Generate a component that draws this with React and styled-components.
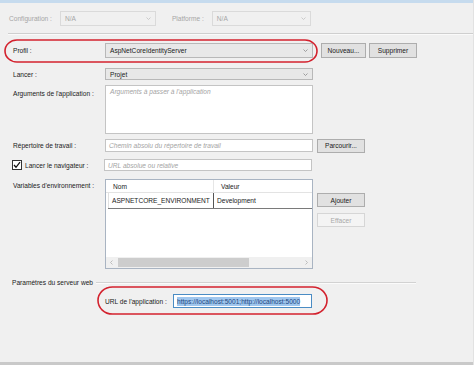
import React from "react";
import styled, { createGlobalStyle } from "styled-components";

const GlobalStyle = createGlobalStyle`
  html, body {
    margin: 0;
    padding: 0;
    background: #f0f0f0;
  }
  body {
    font-family: "Liberation Sans", Arial, sans-serif;
    font-size: 6.6px;
    color: #1a1a1a;
  }
`;

const Chevron = ({ dir = "down", color = "#8a8a8a" }) => {
  const pts = {
    down: "0.5,0.5 2.5,2.5 4.5,0.5",
    left: "2.5,0.5 0.5,2.5 2.5,4.5",
    right: "0.5,0.5 2.5,2.5 0.5,4.5",
  }[dir];
  const size = dir === "down" ? [5, 3] : [3, 5];
  return (
    <svg width={size[0]} height={size[1]} viewBox={`0 0 ${size[0]} ${size[1]}`}>
      <polyline points={pts} fill="none" stroke={color} strokeWidth="0.8" />
    </svg>
  );
};

const Annotation = ({ w, h, left, top }) => (
  <Ring style={{ left, top }} width={w} height={h} viewBox={`0 0 ${w} ${h}`}>
    <rect
      x="1"
      y="1"
      width={w - 2}
      height={h - 2}
      rx={Math.min(16, h / 2)}
      ry={h / 2 - 1}
      fill="none"
      stroke="#d3222e"
      strokeWidth="1.6"
    />
  </Ring>
);

export default function App() {
  return (
    <>
      <GlobalStyle />
      <Page>
        <TopStrip />
        <ConfigBar>
          <DimLabel>Configuration :</DimLabel>
          <Select $w={96} $h={15} $disabled>
            <span>N/A</span>
            <Chevron color="#c0c0c0" />
          </Select>
          <DimLabel $ml={16}>Platforme :</DimLabel>
          <Select $w={99} $h={15} $disabled>
            <span>N/A</span>
            <Chevron color="#c0c0c0" />
          </Select>
        </ConfigBar>
        <Divider />

        <Form>
          <Row $top={9} $h={15}>
            <Annotation w={314} h={24} left={-9} top={-4} />
            <Label>Profil :</Label>
            <Select $w={208} $h={15}>
              <span>AspNetCoreIdentityServer</span>
              <Chevron />
            </Select>
            <Actions $gap={3} $ml={8}>
              <Button $w={45}>Nouveau...</Button>
              <Button $w={48}>Supprimer</Button>
            </Actions>
          </Row>

          <Row $top={10} $h={12}>
            <Label>Lancer :</Label>
            <Select $w={208} $h={12}>
              <span>Projet</span>
              <Chevron />
            </Select>
          </Row>

          <Row $top={5} $h={49} $topAlign>
            <Label $pt={5}>Arguments de l'application :</Label>
            <TextArea $w={208} $h={49}>
              <Placeholder>Arguments à passer à l'application</Placeholder>
            </TextArea>
          </Row>

          <Row $top={5} $h={13}>
            <Label>Répertoire de travail :</Label>
            <Input $w={208} $h={13}>
              <Placeholder>Chemin absolu du répertoire de travail</Placeholder>
            </Input>
            <Actions $ml={4}>
              <Button $w={48} $h={14}>Parcourir...</Button>
            </Actions>
          </Row>

          <Row $top={7} $h={12}>
            <Label $indent={-1}>
              <CheckBox>
                <svg width="8" height="8" viewBox="0 0 8 8">
                  <polyline
                    points="1,4 3,6.3 7,1.2"
                    fill="none"
                    stroke="#111"
                    strokeWidth="1.3"
                  />
                </svg>
              </CheckBox>
              Lancer le navigateur :
            </Label>
            <Input $w={208} $h={12}>
              <Placeholder>URL absolue ou relative</Placeholder>
            </Input>
          </Row>

          <Row $top={8} $h={90} $topAlign>
            <Label $pt={3}>Variables d'environnement :</Label>
            <Grid>
              <GridHead>
                <HeadCell $w={108}>Nom</HeadCell>
                <HeadCell>Valeur</HeadCell>
              </GridHead>
              <GridRow>
                <Cell $w={108} $edit>ASPNETCORE_ENVIRONMENT</Cell>
                <Cell>Development</Cell>
              </GridRow>
              <GridBody />
              <ScrollBar>
                <ScrollArrow>
                  <Chevron dir="left" color="#b0b0b0" />
                </ScrollArrow>
                <ScrollTrack>
                  <Thumb style={{ width: "72%" }} />
                </ScrollTrack>
                <ScrollArrow>
                  <Chevron dir="right" color="#b0b0b0" />
                </ScrollArrow>
              </ScrollBar>
            </Grid>
            <Actions $ml={4} $column $pt={14} $gap={6}>
              <Button $w={48} $h={14}>Ajouter</Button>
              <Button $w={48} $h={14} $disabled>Effacer</Button>
            </Actions>
          </Row>

          <GroupHead>
            <span>Paramètres du serveur web</span>
            <GroupLine />
          </GroupHead>

          <Row $top={7} $h={14}>
            <Annotation w={231} h={29} left={84} top={-8} />
            <UrlLabel>URL de l'application :</UrlLabel>
            <Input $w={139} $h={14} $focus>
              <Selected>https://localhost:5001;http://localhost:5000</Selected>
            </Input>
          </Row>
        </Form>
        <BottomEdge />
      </Page>
    </>
  );
}

const Page = styled.div`
  position: relative;
  width: 474px;
  height: 365px;
  overflow: hidden;
  background: #f0f0f0;
  border-right: 1px solid #e2e2e2;
  box-sizing: border-box;
  display: flex;
  flex-direction: column;
`;

const TopStrip = styled.div`
  height: 3px;
  background: #c6dbee;
  flex-shrink: 0;
`;

const ConfigBar = styled.div`
  display: flex;
  align-items: center;
  padding: 8px 0 0 9px;
`;

const DimLabel = styled.span`
  color: #a6a6a6;
  margin-left: ${(p) => p.$ml || 0}px;
  margin-right: 8px;
`;

const Divider = styled.div`
  margin: 7px 0 0 8px;
  height: 1px;
  background: #cfcfcf;
  box-shadow: 0 1px 0 #fafafa;
`;

const Form = styled.div`
  display: flex;
  flex-direction: column;
  padding-left: 13px;
`;

const Row = styled.div`
  position: relative;
  display: flex;
  align-items: ${(p) => (p.$topAlign ? "flex-start" : "center")};
  margin-top: ${(p) => p.$top}px;
  height: ${(p) => p.$h}px;
`;

const Label = styled.div`
  width: 92px;
  flex-shrink: 0;
  display: flex;
  align-items: center;
  align-self: ${(p) => (p.$pt ? "flex-start" : "center")};
  padding-top: ${(p) => p.$pt || 0}px;
  margin-left: ${(p) => p.$indent || 0}px;
  white-space: nowrap;
`;

const UrlLabel = styled.div`
  margin-left: 92px;
  width: 68px;
  white-space: nowrap;
`;

const Ring = styled.svg`
  position: absolute;
  pointer-events: none;
  z-index: 2;
`;

const fieldBox = `
  box-sizing: border-box;
  display: flex;
  align-items: center;
  padding: 0 4px;
  flex-shrink: 0;
  overflow: hidden;
  white-space: nowrap;
`;

const Select = styled.div`
  ${fieldBox}
  width: ${(p) => p.$w}px;
  height: ${(p) => p.$h}px;
  justify-content: space-between;
  background: ${(p) => (p.$disabled ? "#f0f0f0" : "#e8e8e8")};
  border: 1px solid ${(p) => (p.$disabled ? "#dadada" : "#b8b8b8")};
  color: ${(p) => (p.$disabled ? "#a6a6a6" : "#1a1a1a")};
`;

const Input = styled.div`
  ${fieldBox}
  width: ${(p) => p.$w}px;
  height: ${(p) => p.$h}px;
  background: #fff;
  border: 1px solid ${(p) => (p.$focus ? "#4a8cc4" : "#c4c4c4")};
  padding: 0 3px;
`;

const TextArea = styled.div`
  ${fieldBox}
  align-items: flex-start;
  padding-top: 2px;
  width: ${(p) => p.$w}px;
  height: ${(p) => p.$h}px;
  background: #fff;
  border: 1px solid #c4c4c4;
`;

const Placeholder = styled.span`
  color: #a3a3a3;
  font-style: italic;
`;

const Selected = styled.span`
  background: #9fc6ee;
  color: #1d4780;
  padding: 1px 0;
`;

const Actions = styled.div`
  display: flex;
  flex-direction: ${(p) => (p.$column ? "column" : "row")};
  gap: ${(p) => p.$gap || 0}px;
  margin-left: ${(p) => p.$ml || 0}px;
  padding-top: ${(p) => p.$pt || 0}px;
  align-self: ${(p) => (p.$column ? "flex-start" : "center")};
`;

const Button = styled.div`
  box-sizing: border-box;
  width: ${(p) => p.$w}px;
  height: ${(p) => p.$h || 15}px;
  display: flex;
  align-items: center;
  justify-content: center;
  background: ${(p) => (p.$disabled ? "#f4f4f4" : "#e1e1e1")};
  border: 1px solid ${(p) => (p.$disabled ? "#d6d6d6" : "#adadad")};
  color: ${(p) => (p.$disabled ? "#a8a8a8" : "#1a1a1a")};
`;

const CheckBox = styled.span`
  box-sizing: border-box;
  width: 10px;
  height: 10px;
  border: 1px solid #333;
  background: #fff;
  display: inline-flex;
  align-items: center;
  justify-content: center;
  margin-right: 3px;
`;

const Grid = styled.div`
  box-sizing: border-box;
  width: 208px;
  height: 90px;
  flex-shrink: 0;
  background: #fff;
  border: 1px solid #a9b4c2;
  display: flex;
  flex-direction: column;
`;

const GridHead = styled.div`
  display: flex;
  height: 12px;
  flex-shrink: 0;
  border-bottom: 1px solid #e3e3e3;
`;

const HeadCell = styled.div`
  width: ${(p) => (p.$w ? `${p.$w}px` : "auto")};
  flex: ${(p) => (p.$w ? "0 0 auto" : "1")};
  box-sizing: border-box;
  padding-left: 7px;
  display: flex;
  align-items: center;
  border-right: ${(p) => (p.$w ? "1px solid #e6e6e6" : "none")};
`;

const GridRow = styled.div`
  display: flex;
  height: 15px;
  flex-shrink: 0;
  margin-left: 2px;
  border-bottom: 1px solid #7a7a7a;
`;

const Cell = styled.div`
  width: ${(p) => (p.$w ? `${p.$w - 2}px` : "auto")};
  flex: ${(p) => (p.$w ? "0 0 auto" : "1")};
  box-sizing: border-box;
  padding-left: 3px;
  display: flex;
  align-items: center;
  white-space: nowrap;
  overflow: hidden;
  border-right: ${(p) => (p.$edit ? "1px solid #555" : "none")};
  border-left: ${(p) => (p.$edit ? "1px solid #e0e0e0" : "none")};
`;

const GridBody = styled.div`
  flex: 1;
`;

const ScrollBar = styled.div`
  height: 11px;
  flex-shrink: 0;
  display: flex;
  background: #f0f0f0;
`;

const ScrollArrow = styled.div`
  width: 11px;
  display: flex;
  align-items: center;
  justify-content: center;
`;

const ScrollTrack = styled.div`
  flex: 1;
  display: flex;
  align-items: center;
  padding: 0 1px;
`;

const Thumb = styled.div`
  height: 9px;
  background: #cdcdcd;
`;

const GroupHead = styled.div`
  display: flex;
  align-items: center;
  margin: 8px 0 0 -1px;
  height: 10px;
  white-space: nowrap;
`;

const GroupLine = styled.div`
  width: 320px;
  height: 1px;
  margin-left: 3px;
  background: #d2d2d2;
  box-shadow: 0 1px 0 #fbfbfb;
`;

const BottomEdge = styled.div`
  margin-top: auto;
  height: 3px;
  background: #c9c9c9;
`;
